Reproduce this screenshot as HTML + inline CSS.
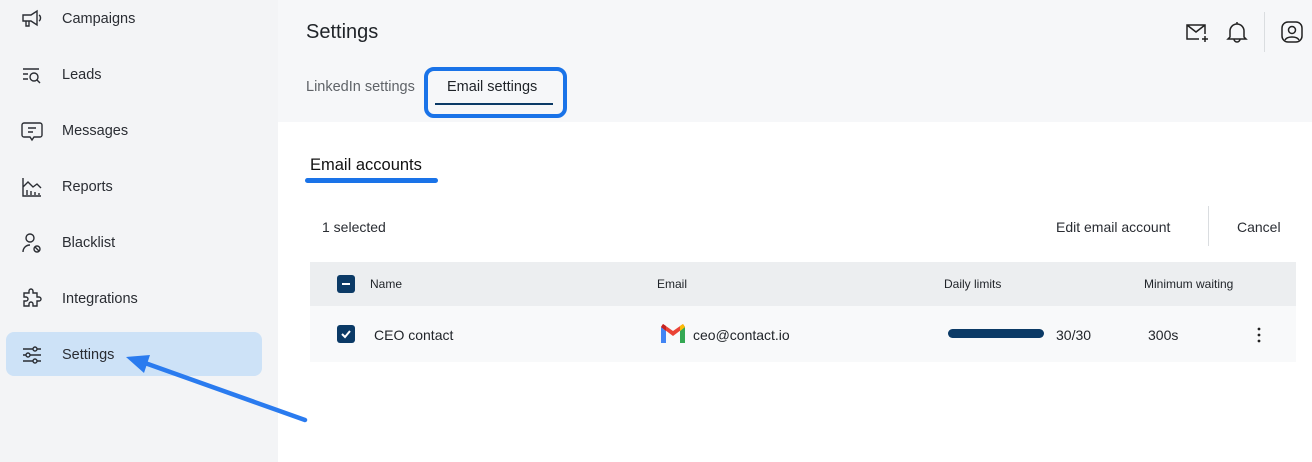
<!DOCTYPE html>
<html><head><style>
*{margin:0;padding:0;box-sizing:border-box}
body{width:1312px;height:462px;overflow:hidden;font-family:"Liberation Sans",sans-serif;background:#fff;position:relative;color:#1f2328}
.sb{position:absolute;left:0;top:0;width:278px;height:462px;background:#f3f4f6}
.it{position:absolute;left:20px;height:24px;display:flex;align-items:center;font-size:14.5px;color:#2a2d33}
.it svg{width:24px;height:24px;margin-right:18px;fill:none;stroke:#2a2d33;stroke-width:1.4}
.sel{position:absolute;left:6px;top:332px;width:256px;height:44px;background:#cde2f7;border-radius:8px}
.top{position:absolute;left:278px;top:0;width:1034px;height:122px;background:#f6f7f9}
.t{position:absolute;white-space:nowrap}
</style></head><body>
<div class="sb"></div>
<div class="sel"></div>
<div class="it" style="top:7px"><svg viewBox="0 0 24 24"><path d="M3 8h8l6-4v14l-6-4H3z M6 14v5h3v-5 M19 8c2 1 2 5 0 6"/></svg>Campaigns</div>
<div class="it" style="top:63px"><svg viewBox="0 0 24 24"><path d="M3 6h16 M3 11h5 M3 16h5"/><circle cx="14" cy="14" r="4"/><path d="M17 17l3 3"/></svg>Leads</div>
<div class="it" style="top:119px"><svg viewBox="0 0 24 24"><path d="M4 4h16a2 2 0 0 1 2 2v10a2 2 0 0 1-2 2h-6l-2 3-2-3H4a2 2 0 0 1-2-2V6a2 2 0 0 1 2-2z M8 9h8 M8 13h5"/></svg>Messages</div>
<div class="it" style="top:175px"><svg viewBox="0 0 24 24"><path d="M3 3v18h18 M3 12l5-5 5 5 4-3 4 4 M7 20v-5 M11 20v-4 M15 20v-3 M19 20v-2"/></svg>Reports</div>
<div class="it" style="top:231px"><svg viewBox="0 0 24 24"><circle cx="10" cy="7" r="4"/><path d="M3 21c0-4 3-7 7-7"/><circle cx="17" cy="18" r="3"/><path d="M15 16l4 4"/></svg>Blacklist</div>
<div class="it" style="top:287px"><svg viewBox="0 0 24 24"><path d="M9 4a2 2 0 0 1 4 0v2h4v4h2a2 2 0 0 1 0 4h-2v5h-4v-2a2 2 0 0 0-4 0v2H4v-5h2a2 2 0 0 0 0-4H4V6h5z"/></svg>Integrations</div>
<div class="it" style="top:343px"><svg viewBox="0 0 24 24"><path d="M3 6h18 M3 12h18 M3 18h18"/><circle cx="15" cy="6" r="2" fill="#cde2f7"/><circle cx="8" cy="12" r="2" fill="#cde2f7"/><circle cx="15" cy="18" r="2" fill="#cde2f7"/></svg>Settings</div>

<div class="top"></div>
<div class="t" style="left:306px;top:21px;font-size:20px;color:#1f2328">Settings</div>
<svg style="position:absolute;left:1185px;top:22px" width="24" height="22" viewBox="0 0 24 22" fill="none" stroke="#222" stroke-width="1.5"><path d="M14 17H2V3h18v9 M2 3l9 7 9-7 M17 17h6 M20 14v6"/></svg>
<svg style="position:absolute;left:1226px;top:20px" width="22" height="24" viewBox="0 0 22 24" fill="none" stroke="#222" stroke-width="1.5"><path d="M4 17V11a7 7 0 0 1 14 0v6l2 2H2z M8 19a3 3 0 0 0 6 0 M11 2v2"/></svg>
<div style="position:absolute;left:1264px;top:12px;width:1px;height:40px;background:#dadde0"></div>
<svg style="position:absolute;left:1281px;top:21px" width="22" height="22" viewBox="0 0 22 22" fill="none" stroke="#222" stroke-width="1.5"><rect x="1" y="1" width="20" height="20" rx="6"/><circle cx="11" cy="9" r="3.5"/><path d="M4 19c2-4 12-4 14 0"/></svg>
<div class="t" style="left:306px;top:79px;font-size:14.5px;color:#5f6368">LinkedIn settings</div>
<div style="position:absolute;left:424px;top:67px;width:143px;height:51px;border:4px solid #1a73e8;border-radius:10px"></div>
<div class="t" style="left:447px;top:79px;font-size:14.5px;color:#1f2328">Email settings</div>
<div style="position:absolute;left:435px;top:103px;width:118px;height:2px;background:#0b3a66"></div>
<div class="t" style="left:310px;top:156px;font-size:16.5px;color:#111">Email accounts</div>
<div style="position:absolute;left:305px;top:178px;width:133px;height:5px;background:#1a73e8;border-radius:3px"></div>
<div class="t" style="left:322px;top:219px;font-size:14px;color:#2a2d33">1 selected</div>
<div class="t" style="left:1056px;top:219px;font-size:14px;color:#2a2d33">Edit email account</div>
<div style="position:absolute;left:1208px;top:206px;width:1px;height:40px;background:#dadde0"></div>
<div class="t" style="left:1237px;top:219px;font-size:14px;color:#2a2d33">Cancel</div>
<div style="position:absolute;left:310px;top:262px;width:986px;height:44px;background:#eceef0"></div>
<div style="position:absolute;left:310px;top:306px;width:986px;height:56px;background:#f8f9fa"></div>
<div style="position:absolute;left:337px;top:275px;width:18px;height:18px;background:#0b3a66;border-radius:3px"><div style="position:absolute;left:5px;top:8px;width:8px;height:2px;background:#fff"></div></div>
<div class="t" style="left:370px;top:277px;font-size:12px">Name</div>
<div class="t" style="left:657px;top:277px;font-size:12px">Email</div>
<div class="t" style="left:944px;top:277px;font-size:12px">Daily limits</div>
<div class="t" style="left:1144px;top:277px;font-size:12px;width:96px;overflow:hidden">Minimum waiting</div>
<div style="position:absolute;left:337px;top:325px;width:18px;height:18px;background:#0b3a66;border-radius:3px"><svg width="18" height="18" viewBox="0 0 18 18"><path d="M5 9l3 3 5-6" fill="none" stroke="#fff" stroke-width="2"/></svg></div>
<div class="t" style="left:374px;top:327px;font-size:14px">CEO contact</div>
<svg style="position:absolute;left:661px;top:324px" width="24" height="19" viewBox="0 0 24 19"><path d="M0 3v16h5V7z" fill="#4285f4"/><path d="M19 7v12h5V3z" fill="#34a853"/><path d="M0 3l12 9 12-9-2-3-10 7L2 0z" fill="#ea4335"/><path d="M19 7l5-4-2-3-3 2z" fill="#fbbc04"/><path d="M5 7V2L2 0 0 3z" fill="#c5221f"/></svg>
<div class="t" style="left:693px;top:327px;font-size:14px">ceo@contact.io</div>
<div style="position:absolute;left:948px;top:329px;width:96px;height:9px;background:#0b3a66;border-radius:5px"></div>
<div class="t" style="left:1056px;top:327px;font-size:14px">30/30</div>
<div class="t" style="left:1148px;top:327px;font-size:14px">300s</div>
<svg style="position:absolute;left:1256px;top:327px" width="6" height="16"><circle cx="3" cy="2" r="1.4" fill="#222"/><circle cx="3" cy="8" r="1.4" fill="#222"/><circle cx="3" cy="14" r="1.4" fill="#222"/></svg>
<svg style="position:absolute;left:0;top:0" width="1312" height="462"><path d="M305 420 L145 363" stroke="#2a7bef" stroke-width="4.5" stroke-linecap="round"/><path d="M126 357 L150 355 L144 373 Z" fill="#2a7bef"/></svg>
</body></html>
